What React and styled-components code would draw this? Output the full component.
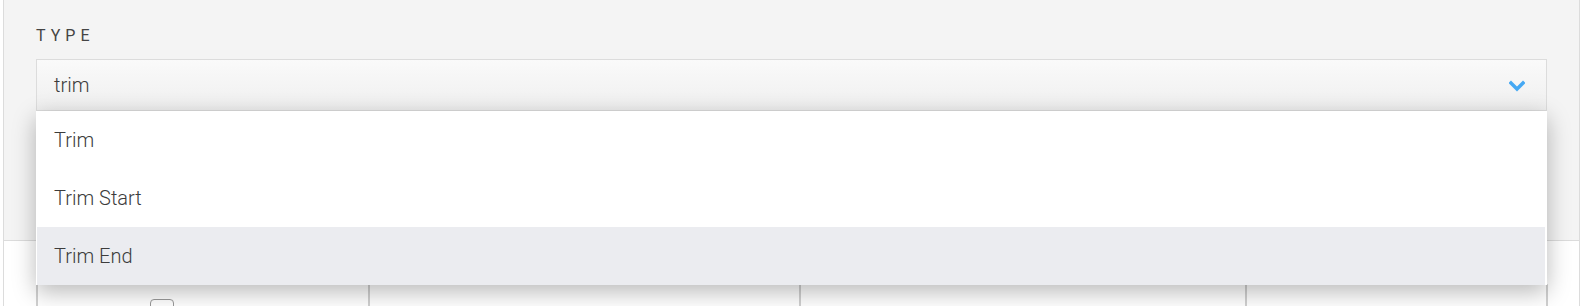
import styled, { createGlobalStyle } from "styled-components";

const options = ["Trim", "Trim Start", "Trim End"];
const columns = [
  { width: 332, label: "" },
  { width: 431, label: "Field" },
  { width: 446, label: "Label" },
  { width: 301, label: "Default" },
];

function Chevron() {
  return (
    <svg width="16" height="12" viewBox="0 0 16 12">
      <path
        d="M2 3 L8 9 L14 3"
        fill="none"
        stroke="#45a8f3"
        strokeWidth="3.4"
        strokeLinecap="square"
      />
    </svg>
  );
}

function App() {
  return (
    <>
      <GlobalStyle />
      <Frame>
        <Panel>
          <Label>TYPE</Label>
          <SelectWrap>
            <SelectBox>
              <span>trim</span>
              <Chevron />
            </SelectBox>
            <Menu>
              {options.map((o, i) => (
                <MenuItem key={o} active={i === 2}>
                  {o}
                </MenuItem>
              ))}
            </Menu>
          </SelectWrap>
        </Panel>
        <Table>
          {columns.map((c, i) => (
            <HeadCell key={i} first={i === 0} style={{ width: c.width }}>
              {i === 0 ? <Check /> : c.label}
            </HeadCell>
          ))}
        </Table>
      </Frame>
    </>
  );
}

const GlobalStyle = createGlobalStyle`
  body {
    margin: 0;
    background: #ffffff;
    font-family: Roboto, "Liberation Sans", sans-serif;
    overflow: hidden;
  }
`;

const Frame = styled.div`
  margin-left: 3px;
  width: 1577px;
  box-sizing: border-box;
  border-left: 1px solid #dcdcdc;
  border-right: 1px solid #dcdcdc;
  height: 306px;
  overflow: hidden;
`;

const Panel = styled.div`
  background: #f4f4f4;
  height: 241px;
  box-sizing: border-box;
  padding: 26px 32px 0;
  border-bottom: 1px solid #dcdcdc;
`;

const Label = styled.div`
  font-size: 16px;
  line-height: 20px;
  letter-spacing: 5px;
  color: #444444;
  margin-bottom: 13px;
`;

const SelectWrap = styled.div`
  position: relative;
`;

const SelectBox = styled.div`
  height: 52px;
  box-sizing: border-box;
  border: 1px solid #dcdcdc;
  background: linear-gradient(#fafafa, #efefef);
  display: flex;
  align-items: center;
  justify-content: space-between;
  padding: 0 21px 0 17px;
  font-size: 20px;
  font-weight: 300;
  color: #3c3c3c;
  svg {
    margin-top: 2px;
  }
`;

const Menu = styled.div`
  position: absolute;
  top: 100%;
  left: 0;
  right: 0;
  z-index: 5;
  background: #ffffff;
  border-left: 1px solid #ffffff;
  border-right: 2px solid #ffffff;
  box-shadow: 0 7px 22px rgba(0, 0, 0, 0.28);
`;

const MenuItem = styled.div`
  height: 58px;
  display: flex;
  align-items: center;
  padding-left: 17px;
  font-size: 20px;
  font-weight: 300;
  color: #3c3c3c;
  background: ${(p) => (p.active ? "#ebecf0" : "#ffffff")};
`;

const Table = styled.div`
  display: flex;
  margin: 43px 0 0 32px;
  border-top: 1px solid #dcdcdc;
  border-left: 2px solid #d0d0d0;
  width: max-content;
`;

const HeadCell = styled.div`
  box-sizing: border-box;
  height: 50px;
  border-right: 2px solid #d0d0d0;
  display: flex;
  justify-content: ${(p) => (p.first ? "flex-start" : "center")};
  padding: ${(p) => (p.first ? "14px 0 0 112px" : "18px 0 0")};
  font-size: 18px;
  color: #555555;
`;

const Check = styled.div`
  width: 24px;
  height: 24px;
  box-sizing: border-box;
  border: 1px solid #999999;
  border-radius: 4px;
  background: #ffffff;
`;

export default App;
